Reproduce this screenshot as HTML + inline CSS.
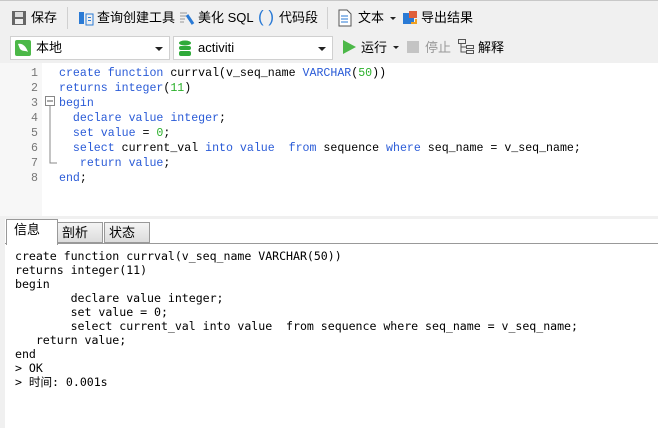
<!DOCTYPE html>
<html><head><meta charset="utf-8"><style>
*{margin:0;padding:0;box-sizing:border-box}
body{width:658px;height:428px;background:#f0f0f0;font-family:"Liberation Sans","Noto Sans CJK SC",sans-serif;font-size:13px;color:#000;position:relative;overflow:hidden}
.a{position:absolute;white-space:pre}
.tb{font-size:13px;line-height:16px}
.combo{position:absolute;top:36px;height:24px;background:#fff;border:1px solid #d0d0d0}
.arr{position:absolute;right:6px;top:10px;width:0;height:0;border-left:4px solid transparent;border-right:4px solid transparent;border-top:4px solid #222}
.code{font-family:"Liberation Mono",monospace;font-size:11.6px;line-height:15px}
.k{color:#2a5bd7}.n{color:#2bb02b}
.ln{color:#777;text-align:right;width:38px}
.out{font-family:"DejaVu Sans Mono","Liberation Mono","Noto Sans CJK SC",monospace;font-size:11.6px;line-height:14px;letter-spacing:-0.03px}
.tab{position:absolute;top:222px;height:21px;border:1px solid #999;background:linear-gradient(#f4f4f4,#dcdcdc);font-size:13px;line-height:16px;padding:2px 0 0 4px}
</style></head><body>
<div class="a" style="left:0;top:0;width:658px;height:1px;background:#c8c8c8"></div>
<svg class="a" style="left:11px;top:10px" width="16" height="16"><rect x="1" y="1" width="14" height="14" fill="#666"/><rect x="4" y="2" width="8" height="5" fill="#ddd"/><rect x="4" y="9" width="8" height="5" fill="#eee"/></svg>
<div class="a tb" style="left:31px;top:10px">保存</div>
<div class="a" style="left:67px;top:7px;width:1px;height:22px;background:#d0d0d0"></div>
<svg class="a" style="left:78px;top:10px" width="16" height="16"><rect x="1" y="2" width="5" height="12" fill="#2a7ad5"/><rect x="8" y="4" width="7" height="11" fill="none" stroke="#2a7ad5"/><rect x="10" y="7" width="3" height="1" fill="#2a7ad5"/><rect x="10" y="10" width="3" height="1" fill="#2a7ad5"/></svg>
<div class="a tb" style="left:97px;top:10px">查询创建工具</div>
<svg class="a" style="left:179px;top:10px" width="16" height="16"><g stroke="#999"><line x1="1" y1="3" x2="8" y2="3"/><line x1="1" y1="6" x2="8" y2="6"/><line x1="1" y1="9" x2="6" y2="9"/><line x1="1" y1="12" x2="5" y2="12"/></g><line x1="8" y1="5" x2="14" y2="14" stroke="#2a7ad5" stroke-width="3"/></svg>
<div class="a tb" style="left:198px;top:10px">美化 SQL</div>
<div class="a" style="left:258px;top:8px;font-size:17px;color:#2a7ad5;line-height:18px">( )</div>
<div class="a tb" style="left:279px;top:10px">代码段</div>
<div class="a" style="left:327px;top:7px;width:1px;height:22px;background:#d0d0d0"></div>
<svg class="a" style="left:338px;top:9px" width="14" height="18"><path d="M1 1H9L13 5V17H1Z" fill="#fff" stroke="#555"/><g stroke="#2a7ad5"><line x1="3" y1="7" x2="10" y2="7"/><line x1="3" y1="10" x2="10" y2="10"/><line x1="3" y1="13" x2="10" y2="13"/></g></svg>
<div class="a tb" style="left:358px;top:10px">文本</div>
<div class="a" style="left:390px;top:17px;border-left:3px solid transparent;border-right:3px solid transparent;border-top:3px solid #222"></div>
<svg class="a" style="left:402px;top:10px" width="16" height="16"><rect x="1" y="3" width="11" height="11" fill="#2a7ad5"/><rect x="7" y="1" width="8" height="7" fill="#e0603a"/><path d="M9 13L14 13L14 9" stroke="#f0a020" stroke-width="2" fill="none"/></svg>
<div class="a tb" style="left:421px;top:10px">导出结果</div>
<div class="combo" style="left:10px;width:160px"><svg class="a" style="left:4px;top:3px" width="16" height="16"><rect width="16" height="16" rx="2" fill="#4cb848"/><path d="M3 4C7 3 11 6 13 12C10 10 8 12 5 9Z" fill="#fff"/></svg><div class="a tb" style="left:25px;top:3px">本地</div><div class="arr"></div></div>
<div class="combo" style="left:173px;width:160px"><svg class="a" style="left:4px;top:3px" width="14" height="17"><g fill="#2faa3a"><ellipse cx="7" cy="3" rx="6" ry="2.5"/><rect x="1" y="6" width="12" height="4" rx="2"/><rect x="1" y="11" width="12" height="5" rx="2"/></g></svg><div class="a tb" style="left:24px;top:3px">activiti</div><div class="arr"></div></div>
<svg class="a" style="left:343px;top:40px" width="13" height="14"><path d="M0 0L13 7L0 14Z" fill="#4cb848"/></svg>
<div class="a tb" style="left:361px;top:40px">运行</div>
<div class="a" style="left:393px;top:46px;border-left:3px solid transparent;border-right:3px solid transparent;border-top:3px solid #222"></div>
<div class="a" style="left:407px;top:41px;width:12px;height:12px;background:#c4c4c4"></div>
<div class="a tb" style="left:425px;top:40px;color:#999">停止</div>
<svg class="a" style="left:458px;top:39px" width="16" height="16" fill="none" stroke="#555"><rect x="0.5" y="0.5" width="7" height="4"/><rect x="8.5" y="6.5" width="7" height="3"/><rect x="8.5" y="11.5" width="7" height="3"/><path d="M3 5V13H8M3 8H8"/></svg>
<div class="a tb" style="left:478px;top:40px">解释</div>
<div class="a" style="left:0;top:63px;width:658px;height:153px;background:#fff"></div>
<div class="a" style="left:0;top:63px;width:42px;height:153px;background:#f7f7f7"></div>
<div class="a code ln" style="left:0;top:66px">1
2
3
4
5
6
7
8</div>
<svg class="a" style="left:45px;top:96px" width="12" height="70"><rect x="0.5" y="0.5" width="9" height="9" fill="#fff" stroke="#888"/><line x1="2" y1="5" x2="8" y2="5" stroke="#555"/><path d="M5 10V67H12" stroke="#888" fill="none"/></svg>
<div class="a code" style="left:59px;top:66px"><span class="k">create function</span> currval(v_seq_name <span class="k">VARCHAR</span>(<span class="n">50</span>))
<span class="k">returns integer</span>(<span class="n">11</span>)
<span class="k">begin</span>
  <span class="k">declare value integer</span>;
  <span class="k">set value</span> = <span class="n">0</span>;
  <span class="k">select</span> current_val <span class="k">into value  from</span> sequence <span class="k">where</span> seq_name = v_seq_name;
   <span class="k">return value</span>;
<span class="k">end</span>;</div>
<div class="a" style="left:5px;top:219px;width:653px;height:209px;background:#fff"></div>
<div class="a" style="left:5px;top:243px;width:653px;height:1px;background:#999"></div>
<div class="tab" style="left:57px;width:46px">剖析</div>
<div class="tab" style="left:104px;width:46px">状态</div>
<div class="a" style="left:6px;top:219px;width:52px;height:26px;background:#fff;border:1px solid #999;border-bottom:none;font-size:13px;line-height:16px;padding:2px 0 0 7px">信息</div>
<div class="a out" style="left:15px;top:249px">create function currval(v_seq_name VARCHAR(50))
returns integer(11)
begin
        declare value integer;
        set value = 0;
        select current_val into value  from sequence where seq_name = v_seq_name;
   return value;
end
&gt; OK
&gt; 时间: 0.001s</div>
</body></html>
